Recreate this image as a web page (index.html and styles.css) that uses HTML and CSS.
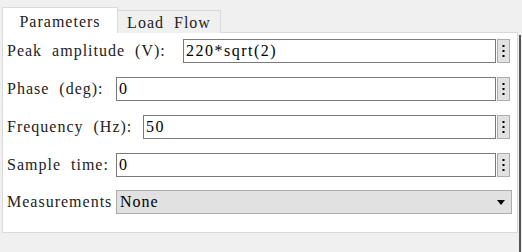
FILE: index.html
```html
<!DOCTYPE html>
<html>
<head>
<meta charset="utf-8">
<link rel="stylesheet" href="styles.css">
</head>
<body>
<div class="dialog">
  <div class="tabs">
    <div class="tab tab-active">Parameters</div>
    <div class="tab tab-inactive">Load Flow</div>
  </div>
  <div class="panel">
    <div class="row">
      <div class="label w-peak">Peak amplitude (V):</div>
      <div class="field">220*sqrt(2)</div>
      <div class="more"><svg width="11" height="22" viewBox="0 0 11 22"><rect x="4.5" y="5" width="2" height="2" fill="#000"/><rect x="4.5" y="10" width="2" height="2" fill="#000"/><rect x="4.5" y="15" width="2" height="2" fill="#000"/></svg></div>
    </div>
    <div class="row">
      <div class="label w-std">Phase (deg):</div>
      <div class="field">0</div>
      <div class="more"><svg width="11" height="22" viewBox="0 0 11 22"><rect x="4.5" y="5" width="2" height="2" fill="#000"/><rect x="4.5" y="10" width="2" height="2" fill="#000"/><rect x="4.5" y="15" width="2" height="2" fill="#000"/></svg></div>
    </div>
    <div class="row">
      <div class="label w-freq">Frequency (Hz):</div>
      <div class="field">50</div>
      <div class="more"><svg width="11" height="22" viewBox="0 0 11 22"><rect x="4.5" y="5" width="2" height="2" fill="#000"/><rect x="4.5" y="10" width="2" height="2" fill="#000"/><rect x="4.5" y="15" width="2" height="2" fill="#000"/></svg></div>
    </div>
    <div class="row">
      <div class="label w-std">Sample time:</div>
      <div class="field">0</div>
      <div class="more"><svg width="11" height="22" viewBox="0 0 11 22"><rect x="4.5" y="5" width="2" height="2" fill="#000"/><rect x="4.5" y="10" width="2" height="2" fill="#000"/><rect x="4.5" y="15" width="2" height="2" fill="#000"/></svg></div>
    </div>
    <div class="row row-last">
      <div class="label w-std">Measurements</div>
      <div class="select"><span>None</span><svg width="8" height="5" viewBox="0 0 8 5"><polygon points="0,0 8,0 4,5" fill="#000"/></svg></div>
    </div>
  </div>
  <div class="edge"></div>
</div>
</body>
</html>
```
FILE: styles.css
```css
html, body {
  margin: 0;
  padding: 0;
  background: #f0f0f0;
}
body {
  width: 522px;
  height: 252px;
  overflow: hidden;
  font-family: "Liberation Serif", serif;
  font-size: 16px;
  letter-spacing: 1px;
  word-spacing: 5px;
  color: #222;
}
.dialog {
  position: relative;
  padding: 7px 0 0 2px;
  height: 245px;
}
.tabs {
  display: flex;
  height: 25px;
  align-items: flex-start;
}
.tab {
  box-sizing: border-box;
  display: flex;
  align-items: center;
  justify-content: center;
}
.tab-active {
  width: 116px;
  height: 26px;
  background: #fff;
  border: 1px solid #d9d9d9;
  border-bottom: none;
  position: relative;
  z-index: 2;
  padding-top: 2px;
}
.tab-inactive {
  width: 104px;
  height: 23px;
  margin-top: 3px;
  margin-left: -1px;
  background: #f0f0f0;
  border: 1px solid #d9d9d9;
  border-bottom: none;
  padding-top: 1px;
}
.panel {
  box-sizing: border-box;
  width: 516px;
  height: 201px;
  background: #fff;
  border: 1px solid #d9d9d9;
  padding: 6px 5px 0 4px;
  display: flex;
  flex-direction: column;
  gap: 14px;
}
.row {
  display: flex;
  align-items: center;
  height: 24px;
}
.row-last {
  margin-top: -1px;
}
.label {
  flex: none;
  white-space: nowrap;
}
.w-peak { width: 176px; }
.w-std { width: 109px; }
.w-freq { width: 136px; }
.field {
  box-sizing: border-box;
  flex: 1;
  height: 24px;
  border: 1px solid #7a7a7a;
  padding-left: 2px;
  display: flex;
  align-items: center;
  color: #000;
  letter-spacing: 1.5px;
}
.more {
  box-sizing: border-box;
  flex: none;
  width: 13px;
  height: 24px;
  margin-left: 1px;
  margin-right: 2px;
  background: #e1e1e1;
  border: 1px solid #adadad;
  display: flex;
}
.select {
  box-sizing: border-box;
  flex: 1;
  height: 24px;
  background: #e1e1e1;
  border: 1px solid #adadad;
  padding: 0 6px 0 3px;
  display: flex;
  align-items: center;
  justify-content: space-between;
  color: #000;
}
.edge {
  position: absolute;
  left: 519px;
  top: 35px;
  width: 2px;
  height: 217px;
  background: #555;
}
```
